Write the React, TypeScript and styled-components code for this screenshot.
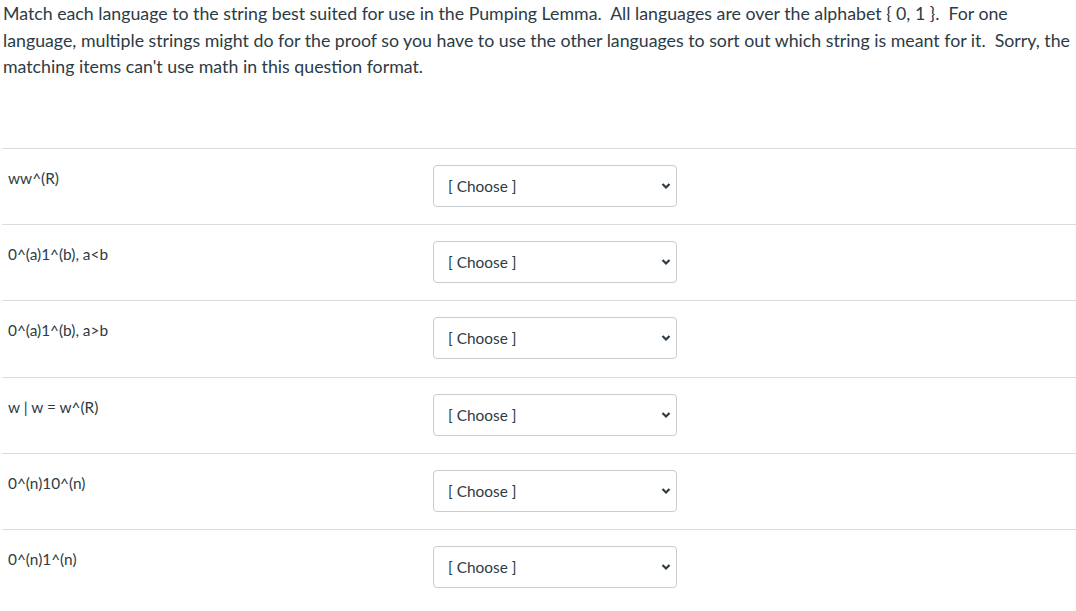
import React from "react";
import styled, { createGlobalStyle } from "styled-components";

const Global = createGlobalStyle`
  body {
    margin: 0;
    background: #fff;
    font-family: Lato, "Helvetica Neue", Arial, sans-serif;
    color: #2d3b45;
  }
`;

const Page = styled.main`
  padding: 0 0 0 2px;
`;

const Prompt = styled.p`
  margin: 0;
  padding: 0 0 0 1px;
  max-width: 1070px;
  font-size: 17.75px;
  line-height: 26.5px;
`;

const Answers = styled.div`
  margin-top: 68px;
`;

const Row = styled.div`
  display: flex;
  align-items: flex-start;
  height: 76.4px;
  box-sizing: border-box;
  border-top: 1px solid #dcdcdc;
`;

const Label = styled.div`
  width: 425px;
  padding: 20px 0 0 6px;
  font-size: 15.4px;
  line-height: 18px;
`;

const SelectWrap = styled.div`
  position: relative;
  margin-top: 16px;
  width: 244px;
`;

const Select = styled.select`
  appearance: none;
  width: 100%;
  height: 42px;
  padding: 0 30px 0 14px;
  border: 1px solid #c7cdd1;
  border-radius: 4px;
  background: #fff;
  font-family: Lato, "Helvetica Neue", Arial, sans-serif;
  font-size: 15.4px;
  color: #2d3b45;
`;

const Chevron = styled.svg`
  position: absolute;
  right: 6px;
  top: 17px;
  pointer-events: none;
`;

const items = [
  "ww^(R)",
  "0^(a)1^(b), a<b",
  "0^(a)1^(b), a>b",
  "w | w = w^(R)",
  "0^(n)10^(n)",
  "0^(n)1^(n)",
];

export default function App() {
  return (
    <Page>
      <Global />
      <Prompt>
        Match each language to the string best suited for use in the Pumping Lemma.&nbsp; All
        languages are over the alphabet {"{"} 0, 1 {"}"}.&nbsp; For one language, multiple strings
        might do for the proof so you have to use the other languages to sort out which string is
        meant for it.&nbsp; Sorry, the matching items can't use math in this question format.
      </Prompt>
      <Answers>
        {items.map((t) => (
          <Row key={t}>
            <Label>{t}</Label>
            <SelectWrap>
              <Select defaultValue="">
                <option value="">[ Choose ]</option>
              </Select>
              <Chevron width="10" height="8" viewBox="0 0 10 8">
                <path d="M1.5 2 L5 5.5 L8.5 2" fill="none" stroke="#2d3b45" strokeWidth="2.2" />
              </Chevron>
            </SelectWrap>
          </Row>
        ))}
      </Answers>
    </Page>
  );
}
